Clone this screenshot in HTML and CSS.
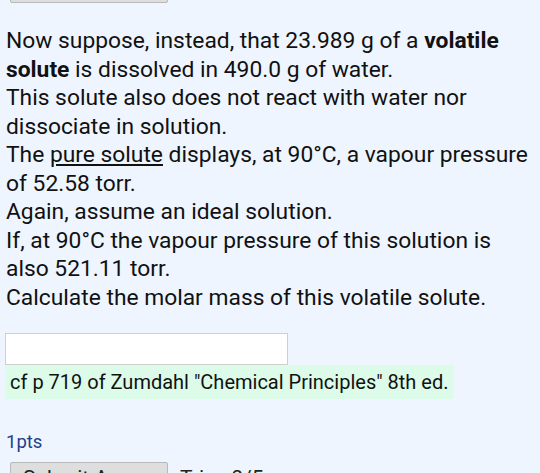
FILE: index.html
```html
<!DOCTYPE html>
<html>
<head>
<meta charset="utf-8">
<link rel="stylesheet" href="styles.css">
</head>
<body>
<div class="page">
  <div class="prev-row"><button class="btn prev-btn">Submit Answer</button></div>
  <div class="question">
    Now suppose, instead, that 23.989 g of a <b>volatile solute</b> is dissolved in 490.0 g of water.<br>
    This solute also does not react with water nor dissociate in solution.<br>
    The <u>pure solute</u> displays, at 90°C, a vapour pressure of 52.58 torr.<br>
    Again, assume an ideal solution.<br>
    If, at 90°C the vapour pressure of this solution is also 521.11 torr.<br>
    Calculate the molar mass of this volatile solute.
  </div>
  <div class="answer-box"></div>
  <div class="hint">cf p 719 of Zumdahl "Chemical Principles" 8th ed.</div>
  <div class="pts">1pts</div>
  <div class="submit-row">
    <button class="btn">Submit Answer</button>
    <span class="tries">Tries 0/5</span>
  </div>
</div>
</body>
</html>
```
FILE: styles.css
```css
html, body {
  margin: 0;
  padding: 0;
  background: #eef5fe;
  overflow: hidden;
}
.page {
  font-family: Roboto, "Noto Sans", sans-serif;
  color: #111;
  width: 540px;
  height: 473px;
  overflow: hidden;
}
.prev-row {
  height: 3px;
  padding-left: 10px;
  display: flex;
  align-items: flex-end;
}
.btn {
  font-family: Roboto, sans-serif;
  font-size: 21px;
  line-height: 30px;
  color: #222;
  background: #dedede;
  border: 1px solid #b9b9b9;
  border-radius: 2px;
  width: 158px;
  height: 32px;
  padding: 0 12px;
  text-align: left;
  white-space: nowrap;
  overflow: hidden;
  flex-shrink: 0;
}
.question {
  margin-top: 24px;
  padding: 0 6px;
  font-size: 22.8px;
  line-height: 28.5px;
}
.question b { font-weight: 700; }
.answer-box {
  margin: 21px 0 0 5px;
  width: 281px;
  height: 30px;
  background: #fff;
  border: 1px solid #cfcfcf;
}
.hint {
  margin-left: 5px;
  display: inline-block;
  background: #dcfbe9;
  font-size: 20px;
  line-height: 34px;
  padding: 0 4px 0 5px;
  color: #111;
}
.pts {
  margin-top: 32px;
  padding-left: 6px;
  font-size: 18.5px;
  line-height: 22px;
  color: #1f3f8a;
}
.submit-row {
  margin-top: 9px;
  padding-left: 10px;
  display: flex;
  align-items: flex-start;
  gap: 12px;
}
.tries {
  font-size: 21px;
  line-height: 32px;
  color: #222;
}
```
